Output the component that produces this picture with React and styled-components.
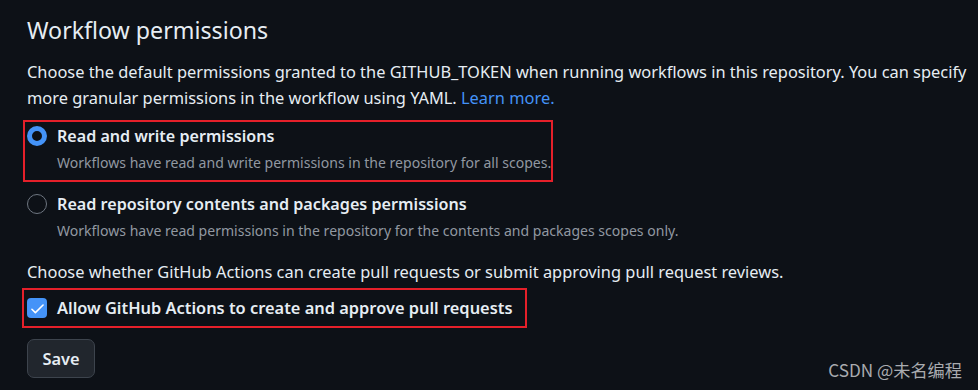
import React from "react";
import styled, { createGlobalStyle } from "styled-components";

const GlobalStyle = createGlobalStyle`
  html, body {
    margin: 0;
    padding: 0;
    background: #0d1117;
  }
  body {
    font-family: "Noto Sans", "Liberation Sans", sans-serif;
    color: #e6edf3;
  }
`;

const Page = styled.div`
  position: relative;
  width: 978px;
  height: 390px;
  box-sizing: border-box;
  padding: 11px 0 0 27px;
  overflow: hidden;
`;

const Heading = styled.h2`
  margin: 0;
  font-size: 23.2px;
  font-weight: 400;
  line-height: 38px;
  color: #e6edf3;
`;

const Text = styled.p`
  margin: ${(p) => p.$mt || 0}px 0 0;
  font-size: 16.4px;
  line-height: 26px;
  color: #e6edf3;
  width: 945px;
`;

const Link = styled.a`
  color: #4493f8;
  text-decoration: none;
`;

const Marked = styled.div`
  box-sizing: border-box;
  width: ${(p) => p.$w}px;
  margin: ${(p) => p.$mt}px 0 0 ${(p) => -p.$shift}px;
  padding: ${(p) => p.$py}px 0 ${(p) => p.$pb ?? p.$py}px ${(p) => p.$shift - 2}px;
  border: 2px solid #e5202a;
`;

const Plain = styled.div`
  margin-top: ${(p) => p.$mt}px;
`;

const Row = styled.label`
  display: flex;
  align-items: center;
  gap: 10px;
  height: 26px;
  white-space: nowrap;
`;

const Radio = styled.span`
  box-sizing: border-box;
  flex: none;
  width: 20px;
  height: 20px;
  border-radius: 50%;
  border: ${(p) => (p.$on ? "5px solid #4493f8" : "1px solid #6e7681")};
  background: #0d1117;
`;

const Check = styled.span`
  flex: none;
  display: flex;
  align-items: center;
  justify-content: center;
  width: 20px;
  height: 20px;
  border-radius: 4px;
  background: #4493f8;
`;

const Label = styled.span`
  font-size: ${(p) => p.$size || 16.2}px;
  font-weight: 600;
  line-height: 26px;
  color: #e6edf3;
`;

const Note = styled.div`
  margin: 1px 0 0 30px;
  font-size: 14.05px;
  line-height: 26px;
  white-space: nowrap;
  color: #9198a1;
`;

const SaveButton = styled.button`
  margin-top: 11px;
  width: 68px;
  height: 39px;
  padding: 0;
  border: 1px solid #3d444d;
  border-radius: 7px;
  background: #21262d;
  color: #e6edf3;
  font-family: inherit;
  font-size: 16.4px;
  font-weight: 600;
`;

const Watermark = styled.div`
  position: absolute;
  right: 16px;
  bottom: 8px;
  font-family: "Noto Sans CJK SC", "Noto Sans", sans-serif;
  font-size: 17.2px;
  color: #a9abaf;
`;

export default function App() {
  return (
    <>
      <GlobalStyle />
      <Page>
        <Heading>Workflow permissions</Heading>
        <Text $mt={10}>
          Choose the default permissions granted to the GITHUB_TOKEN when running
          workflows in this repository. You can specify more granular permissions in
          the workflow using YAML. <Link href="#">Learn more.</Link>
        </Text>

        <Marked $w={530} $mt={9} $shift={4} $py={1} $pb={4}>
          <Row>
            <Radio $on />
            <Label $size={16.1}>Read and write permissions</Label>
          </Row>
          <Note>Workflows have read and write permissions in the repository for all scopes.</Note>
        </Marked>

        <Plain $mt={9}>
          <Row>
            <Radio />
            <Label $size={16.15}>Read repository contents and packages permissions</Label>
          </Row>
          <Note>
            Workflows have read permissions in the repository for the contents and packages
            scopes only.
          </Note>
        </Plain>

        <Text $mt={15}>
          Choose whether GitHub Actions can create pull requests or submit approving pull
          request reviews.
        </Text>

        <Marked $w={505} $mt={3} $shift={5} $py={5}>
          <Row>
            <Check>
              <svg width="17" height="17" viewBox="0 0 16 16" fill="#ffffff">
                <path d="M13.78 4.22a.75.75 0 0 1 0 1.06l-7.25 7.25a.75.75 0 0 1-1.06 0L2.22 9.28a.751.751 0 0 1 .018-1.042.751.751 0 0 1 1.042-.018L6 10.94l6.72-6.72a.75.75 0 0 1 1.06 0Z" />
              </svg>
            </Check>
            <Label $size={16.4}>Allow GitHub Actions to create and approve pull requests</Label>
          </Row>
        </Marked>

        <SaveButton>Save</SaveButton>
        <Watermark>CSDN @未名编程</Watermark>
      </Page>
    </>
  );
}
